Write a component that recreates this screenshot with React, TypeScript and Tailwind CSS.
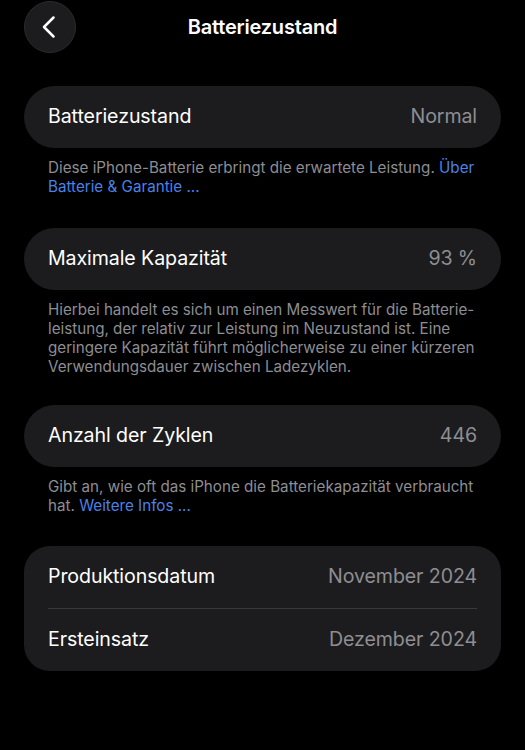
import React from "react";

const font = { fontFamily: "Inter, 'Noto Sans', sans-serif" };

function Row({ label, value }: { label: string; value: string }) {
  return (
    <div className="flex items-center justify-between h-[62px] px-6">
      <span className="text-[19.6px] text-white tracking-[-0.1px]">{label}</span>
      <span className="text-[19.6px] text-[#8e8e93] tracking-[-0.1px]">{value}</span>
    </div>
  );
}

function Foot({ children }: { children: React.ReactNode }) {
  return (
    <div className="px-6 pt-[10px] text-[15.2px] leading-[19px] text-[#8d8d92] flex flex-col">
      {children}
    </div>
  );
}

const Line = ({ children }: { children: React.ReactNode }) => (
  <span className="whitespace-nowrap">{children}</span>
);

export default function App() {
  return (
    <div className="w-[525px] h-[750px] bg-black text-white overflow-hidden" style={font}>
      <div className="relative h-[54px] flex items-center justify-center">
        <button className="absolute left-[24px] top-[1px] w-[52px] h-[52px] rounded-full bg-[#1c1c1e] border border-[#2a2a2c] flex items-center justify-center">
          <svg width="24" height="24" viewBox="0 0 24 24" fill="none">
            <path d="M15.5 2.5 L6 12 L15.5 21.5" stroke="white" strokeWidth="2.5" strokeLinecap="round" strokeLinejoin="round" />
          </svg>
        </button>
        <h1 className="text-[20px] font-semibold tracking-[-0.2px]">Batteriezustand</h1>
      </div>

      <div className="px-6 pt-[32px]">
        <div className="rounded-full bg-[#1c1c1e]">
          <Row label="Batteriezustand" value="Normal" />
        </div>
        <Foot>
          <Line>
            Diese iPhone-Batterie erbringt die erwartete Leistung. <span className="text-[#4b82e6]">Über</span>
          </Line>
          <Line>
            <span className="text-[#4b82e6]">Batterie &amp; Garantie ...</span>
          </Line>
        </Foot>

        <div className="rounded-full bg-[#1c1c1e] mt-[32px]">
          <Row label="Maximale Kapazität" value="93 %" />
        </div>
        <Foot>
          <Line>Hierbei handelt es sich um einen Messwert für die Batterie-</Line>
          <Line>leistung, der relativ zur Leistung im Neuzustand ist. Eine</Line>
          <Line>geringere Kapazität führt möglicherweise zu einer kürzeren</Line>
          <Line>Verwendungsdauer zwischen Ladezyklen.</Line>
        </Foot>

        <div className="rounded-full bg-[#1c1c1e] mt-[29px]">
          <Row label="Anzahl der Zyklen" value="446" />
        </div>
        <Foot>
          <Line>Gibt an, wie oft das iPhone die Batteriekapazität verbraucht</Line>
          <Line>
            hat. <span className="text-[#4b82e6]">Weitere Infos ...</span>
          </Line>
        </Foot>

        <div className="rounded-[26px] bg-[#1c1c1e] mt-[31px]">
          <Row label="Produktionsdatum" value="November 2024" />
          <div className="mx-6 h-px bg-[#38383a]" />
          <Row label="Ersteinsatz" value="Dezember 2024" />
        </div>
      </div>
    </div>
  );
}
